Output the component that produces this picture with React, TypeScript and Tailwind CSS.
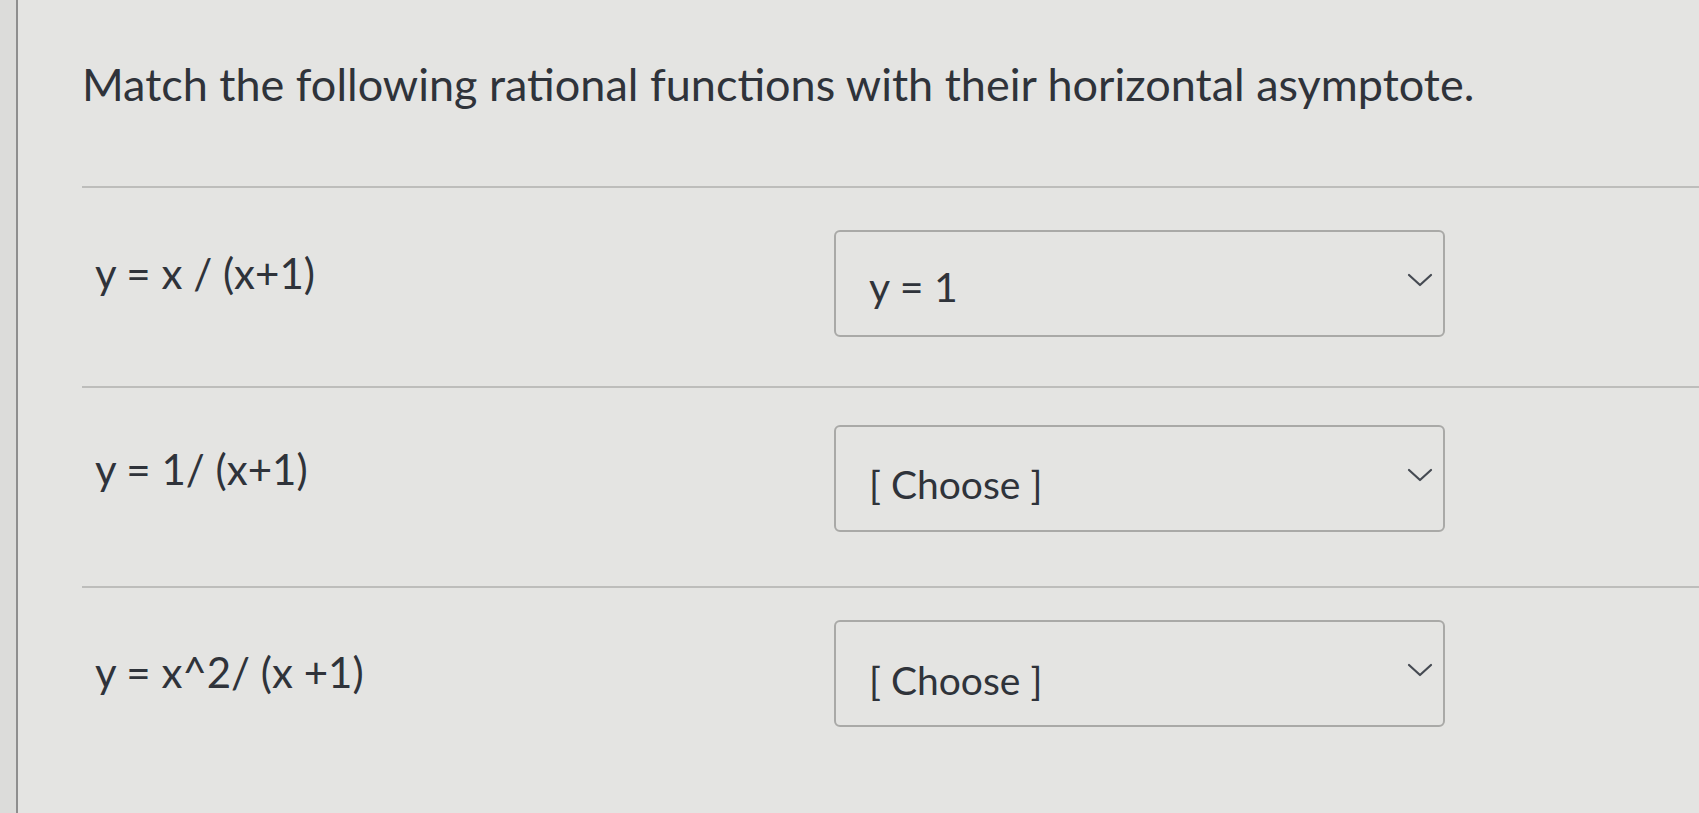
import React from "react";

function Chevron() {
  return (
    <svg width="26" height="14" viewBox="0 0 26 14" fill="none" className="shrink-0 -mt-[8px]">
      <path d="M2 2 L13 12 L24 2" stroke="#454a52" strokeWidth="2.2" strokeLinecap="round" strokeLinejoin="round" />
    </svg>
  );
}

const rows = [
  { f: "y = x / (x+1)", fs: "-mt-[22px]", v: "y = 1", vs: "text-[41px] mt-[6px]", pad: "pt-[42px] pb-[49px]" },
  { f: "y = 1/ (x+1)", fs: "-mt-[20px]", v: "[ Choose ]", vs: "text-[39px] mt-[10px]", pad: "pt-[37px] pb-[54px]" },
  { f: "y = x^2/ (x +1)", fs: "-mt-[4px]", v: "[ Choose ]", vs: "text-[39px] mt-[12px]", pad: "pt-[32px] pb-[59px]" },
];

export default function App() {
  return (
    <div
      className="w-[1699px] h-[813px] overflow-hidden flex bg-[#e4e4e2] text-[#2f333a]"
      style={{ fontFamily: "Lato, 'Open Sans', sans-serif" }}
    >
      <div className="w-[16px] shrink-0 bg-[#dcdcda]" />
      <div className="w-[2px] shrink-0 bg-[#8e8e8e]" />
      <div className="flex-1 pl-[64px]">
        <h1 className="pt-[54px] text-[45px] leading-[60px] font-normal">
          Match the following rational functions with their horizontal asymptote.
        </h1>
        <div className="mt-[72px]">
          {rows.map((r, i) => (
            <div key={i} className={`border-t-2 border-[#bdbdbb] flex items-center ${r.pad}`}>
              <div className={`w-[752px] pl-[13px] text-[42px] leading-[50px] ${r.fs}`}>{r.f}</div>
              <div className="w-[611px] h-[107px] border-2 border-[#a9a9a7] rounded-[6px] flex items-center justify-between pl-[33px] pr-[10px]">
                <span className={`${r.vs} leading-[48px]`}>{r.v}</span>
                <Chevron />
              </div>
            </div>
          ))}
        </div>
      </div>
    </div>
  );
}
